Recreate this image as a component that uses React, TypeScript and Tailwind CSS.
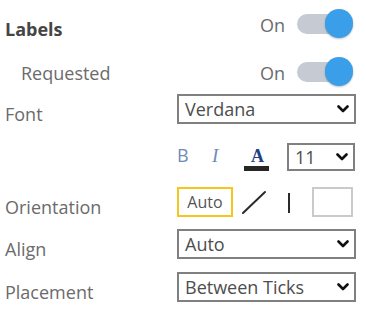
import React from "react";

function Toggle() {
  return (
    <div className="relative w-[56px] h-[29px] flex items-center">
      <div className="w-[52px] h-[20px] rounded-full bg-[#c6cbd3]" />
      <div className="absolute right-0 top-0 w-[28px] h-[29px] rounded-full bg-[#3a9fe8] shadow-[0_1px_2px_rgba(0,0,0,0.25)]" />
    </div>
  );
}

function Chevron() {
  return (
    <svg width="12" height="8" viewBox="0 0 12 8" className="shrink-0">
      <path d="M1.5 1.5 L6 6 L10.5 1.5" fill="none" stroke="#111" strokeWidth="2.6" strokeLinecap="round" strokeLinejoin="round" />
    </svg>
  );
}

function Select({ value, width }: { value: string; width: string }) {
  return (
    <div className={`${width} h-[30px] border-2 border-[#808080] flex items-center justify-between pl-[6px] pr-[5px] text-[#4d4d4d] leading-[24px]`}>
      <span>{value}</span>
      <Chevron />
    </div>
  );
}

function Label({ children }: { children: React.ReactNode }) {
  return (
    <div className="w-[172px] h-[30px] shrink-0 pt-[8px] leading-[24px]">
      {children}
    </div>
  );
}

export default function App() {
  return (
    <div className="w-[366px] h-[309px] bg-white pl-[5px] pt-[9px] text-[18px] text-[#6b6b6b] font-['Open_Sans',sans-serif] overflow-hidden">
      {/* Labels */}
      <div className="flex items-start w-[351px] h-[29px]">
        <div className="flex-1 pt-[8px] leading-[24px] font-bold text-[#454545]">Labels</div>
        <div className="pt-[4px] leading-[24px] mr-[12px]">On</div>
        <Toggle />
        <div className="w-[3px]" />
      </div>

      {/* Requested */}
      <div className="flex items-start w-[351px] h-[29px] mt-[19px]">
        <div className="flex-1 pl-[16px] pt-[4px] leading-[24px]">Requested</div>
        <div className="pt-[4px] leading-[24px] mr-[12px]">On</div>
        <Toggle />
        <div className="w-[3px]" />
      </div>

      {/* Font */}
      <div className="flex items-start h-[30px] mt-[8px]">
        <Label>Font</Label>
        <Select value="Verdana" width="w-[179px]" />
      </div>

      {/* Style row */}
      <div className="flex items-center h-[28px] mt-[19px] pl-[172px]">
        <div className="w-[35px] h-[28px] flex items-center pb-[4px] text-[18px] text-[#6f8bb8] leading-none">B</div>
        <div className="w-[33px] h-[28px] flex items-center pb-[4px] text-[19px] italic text-[#6f8bb8] font-['Liberation_Serif',serif] leading-none">I</div>
        <div className="w-[42px] h-[28px] flex flex-col items-start justify-end">
          <div className="w-[25px] text-center font-['Liberation_Serif',serif] font-bold text-[18px] text-[#1f3f86] leading-[16px]">A</div>
          <div className="w-[25px] h-[5px] bg-[#262626] mt-[2px] -ml-[1px]" />
        </div>
        <div className="w-[68px] h-[28px] border-2 border-[#808080] flex items-center justify-between pl-[6px] pr-[5px] text-[#4d4d4d] leading-[24px]">
          <span>11</span>
          <Chevron />
        </div>
      </div>

      {/* Orientation */}
      <div className="flex items-start h-[30px] mt-[16px]">
        <Label>Orientation</Label>
        <div className="flex items-center h-[30px]">
          <div className="w-[56px] h-[30px] border-2 border-[#f5c71e] flex items-center justify-center text-[16px] text-[#555] leading-none">
            Auto
          </div>
          <svg width="34" height="30" viewBox="0 0 34 30" className="shrink-0">
            <line x1="10" y1="26" x2="32" y2="5" stroke="#2a2a2a" strokeWidth="2" strokeLinecap="round" />
          </svg>
          <svg width="45" height="30" viewBox="0 0 45 30" className="shrink-0">
            <line x1="22" y1="6" x2="22" y2="26" stroke="#2a2a2a" strokeWidth="2" />
          </svg>
          <div className="w-[41px] h-[30px] border-2 border-[#cacaca]" />
        </div>
      </div>

      {/* Align */}
      <div className="flex items-start h-[30px] mt-[12px]">
        <Label>Align</Label>
        <Select value="Auto" width="w-[179px]" />
      </div>

      {/* Placement */}
      <div className="flex items-start h-[30px] mt-[13px]">
        <Label>Placement</Label>
        <Select value="Between Ticks" width="w-[179px]" />
      </div>
    </div>
  );
}
